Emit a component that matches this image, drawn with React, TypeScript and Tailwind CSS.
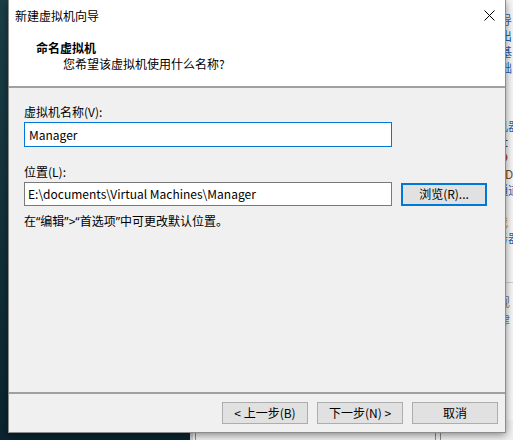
import React from "react";

const font = { fontFamily: '"Noto Sans CJK SC", "Noto Sans", sans-serif' };

function CloseIcon() {
  return (
    <svg width="11" height="11" viewBox="0 0 11 11" className="block">
      <path d="M0.5 0.5 L10.5 10.5 M10.5 0.5 L0.5 10.5" stroke="#000" strokeWidth="1" />
    </svg>
  );
}

function WizardButton({ children }: { children: React.ReactNode }) {
  return (
    <button className="flex h-[22px] w-[86px] items-center justify-center border border-[#adadad] bg-[#e1e1e1] text-[12px] leading-none text-black">
      {children}
    </button>
  );
}

// Latin curly quotes stay narrow, like the Windows UI font
function Q({ children }: { children: React.ReactNode }) {
  return <span className="font-['Noto_Sans']">{children}</span>;
}

export default function App() {
  return (
    <div
      className="relative h-[440px] w-[513px] overflow-hidden bg-gradient-to-b from-[#1b3f47] to-[#0a2430] text-[12px] text-black"
      style={font}
    >
      {/* window behind, right side */}
      <div className="absolute left-[480px] top-0 h-[440px] w-[40px] bg-[#f7f7f7]">
        <div className="absolute left-[20px] top-[12px] flex flex-col text-[12px] leading-[16px] text-[#1f5fb4]">
          <span>导出</span>
          <span>基础</span>
        </div>
        <div className="absolute left-[16px] top-[118px] flex flex-col text-[12px] leading-[16px]">
          <span className="text-[#1f5fb4]">机器</span>
          <span className="text-[#333]">ut <span className="text-[#b0442a]">●</span></span>
          <span className="text-[#7a4a1a]">ODD</span>
          <span className="text-[#1f5fb4]">通道</span>
          <span className="text-[#1f5fb4]">： <span className="text-[#c48a00]">我</span></span>
          <span className="text-[#1f5fb4]">务器</span>
        </div>
        <div className="absolute left-[26px] top-[282px] h-px w-[20px] bg-[#cfcfcf]" />
        <div className="absolute left-[18px] top-[293px] text-[12px] text-[#777]">规律</div>
      </div>

      {/* window behind, bottom */}
      <div className="absolute left-[190px] top-[420px] h-[30px] w-[330px] border-l-[3px] border-[#cfcfcf] bg-[#f0f0f0]">
        <div className="absolute left-[2px] top-0 h-full w-px bg-[#8a8a8a]" />
        <div className="absolute left-[242px] top-0 h-full w-px bg-[#8a8a8a]" />
        <div className="absolute left-[247px] top-0 h-full w-px bg-[#8a8a8a]" />
      </div>

      {/* dialog */}
      <div className="absolute left-[8px] top-0 flex h-[433px] w-[498px] flex-col border-x border-b border-[#8c8c8c] bg-[#f0f0f0] shadow-[0_2px_8px_rgba(0,0,0,0.45)]">
        <div className="flex flex-col border-b-2 border-[#a0a0a0] bg-white">
          <div className="flex h-[31px] items-center justify-between pl-[6px] pr-[10px]">
            <span className="leading-none">新建虚拟机向导</span>
            <CloseIcon />
          </div>
          <div className="h-[55px] pl-[27px] pt-[9px]">
            <div className="text-[12px] font-bold leading-[16px]">命名虚拟机</div>
            <div className="pl-[27px] leading-[16px]">您希望该虚拟机使用什么名称?</div>
          </div>
        </div>

        <div className="flex flex-1 flex-col pl-[15px] pt-[16px]">
          <div className="leading-[16px]">虚拟机名称(V):</div>
          <div className="mt-[2px] flex h-[25px] w-[368px] items-center border border-[#0078d7] bg-white pl-[4px]">
            Manager
          </div>
          <div className="mt-[17px] leading-[16px]">位置(L):</div>
          <div className="mt-[2px] flex items-center gap-[9px]">
            <div className="flex h-[24px] w-[368px] items-center border border-[#7a7a7a] bg-white pl-[3px]">
              E:\documents\Virtual Machines\Manager
            </div>
            <button className="flex h-[23px] w-[86px] items-center justify-center border-2 border-[#0078d7] bg-[#e1e1e1] leading-none">
              浏览(R)...
            </button>
          </div>
          <div className="mt-[7px] leading-[16px]">
            在<Q>“</Q>编辑<Q>”</Q>&gt;<Q>“</Q>首选项<Q>”</Q>中可更改默认位置。
          </div>
        </div>

        <div className="flex h-[40px] items-start justify-end gap-[9px] border-t-2 border-[#a0a0a0] pr-[7px] pt-[8px]">
          <WizardButton>&lt; 上一步(B)</WizardButton>
          <WizardButton>下一步(N) &gt;</WizardButton>
          <WizardButton>取消</WizardButton>
        </div>
      </div>
    </div>
  );
}
